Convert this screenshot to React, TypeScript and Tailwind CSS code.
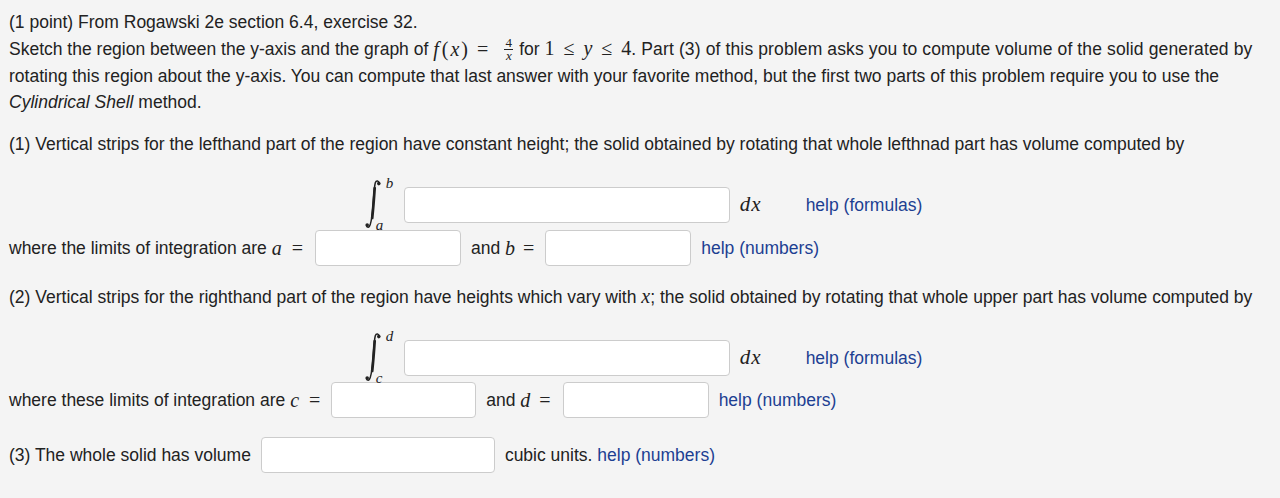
import React from "react";

const V = ({ children, size = "text-[20px]", cls = "" }: { children: React.ReactNode; size?: string; cls?: string }) => (
  <span className={`font-['Liberation_Serif','DejaVu_Serif',serif] italic leading-none ${size} ${cls}`}>{children}</span>
);
const O = ({ children, cls = "" }: { children: React.ReactNode; cls?: string }) => (
  <span className={`font-['Liberation_Serif','DejaVu_Serif',serif] text-[20px] leading-none ${cls}`}>{children}</span>
);

const Link = ({ children, cls = "" }: { children: React.ReactNode; cls?: string }) => (
  <a href="#" className={`text-[#1d3f92] whitespace-nowrap ${cls}`}>{children}</a>
);

const Box = ({ w, cls = "" }: { w: string; cls?: string }) => (
  <input
    type="text"
    className={`h-[36px] ${w} bg-white border border-[#cccccc] rounded-[4px] shrink-0 outline-none ${cls}`}
  />
);

const Integral = ({ upper, lower }: { upper: string; lower: string }) => (
  <div className="relative w-[40px] h-[36px] shrink-0">
    <svg className="absolute left-0 top-[-8px]" width="18" height="50" viewBox="0 0 18 50" fill="none">
      <path
        d="M15.4,4.4 C14.8,1.6 12.2,1.2 11.3,3.8 C10.1,8 9.6,20 8.6,31 C7.9,38.5 7.2,45 5.3,47.5 C4.3,48.8 2.8,48.2 2.6,46.6"
        stroke="#222"
        strokeWidth="1.5"
        strokeLinecap="round"
      />
      <path d="M10.7,9 C10.1,18 9.4,28 8.2,39" stroke="#222" strokeWidth="2.7" strokeLinecap="round" />
      <circle cx="14.8" cy="4.6" r="1.8" fill="#222" />
      <circle cx="3.2" cy="46" r="1.8" fill="#222" />
    </svg>
    <span className="absolute left-[22px] top-[-11px] font-['Liberation_Serif','DejaVu_Serif',serif] italic text-[15px] leading-none">
      {upper}
    </span>
    <span className="absolute left-[12px] top-[31px] font-['Liberation_Serif','DejaVu_Serif',serif] italic text-[15px] leading-none">
      {lower}
    </span>
  </div>
);

const Display = ({ upper, lower, cls }: { upper: string; lower: string; cls: string }) => (
  <div className={`flex items-center justify-center h-[36px] ${cls}`}>
    <div className="flex items-center pl-[6px]">
      <Integral upper={upper} lower={lower} />
      <Box w="w-[326px]" />
      <span className="ml-[10px] w-[24px]">
        <V size="text-[21px]" cls="tracking-[1px]">dx</V>
      </span>
      <Link cls="ml-[42px]">help (formulas)</Link>
    </div>
  </div>
);

export default function App() {
  return (
    <div className="min-h-screen bg-[#f4f4f4] text-[#222] font-['Liberation_Sans',Arial,sans-serif] text-[17.5px] px-[9px] pt-[9px] pb-[20px]">
      <p className="leading-[26.67px] whitespace-nowrap">
        (1 point) From Rogawski 2e section 6.4, exercise 32.
        <br />
        Sketch the region between the y-axis and the graph of{" "}
        <span className="inline-flex items-center align-middle relative top-[-1px]">
          <V cls="mr-[2px]">f</V>
          <O cls="ml-[1px]">(</O>
          <V cls="mx-[2px]">x</V>
          <O>)</O>
          <O cls="ml-[9px] mr-[2px]">=</O>
          <span className="inline-flex flex-col items-center ml-[14px] mr-[1px] font-['Liberation_Serif','DejaVu_Serif',serif] text-[13px] leading-[12px]">
            <span>4</span>
            <span className="block w-[9px] h-[1px] bg-[#222]" />
            <span className="italic">x</span>
          </span>
        </span>{" "}
        for <O>1</O>
        <O cls="mx-[9px]">≤</O>
        <V>y</V>
        <O cls="mx-[9px]">≤</O>
        <O>4</O>
        <span className="tracking-[0.13px]">. Part (3) of this problem asks you to compute volume of the solid generated by</span>
        <br />
        rotating this region about the y-axis. You can compute that last answer with your favorite method, but the first two parts of this problem require you to use the
        <br />
        <em>Cylindrical Shell</em> method.
      </p>

      <p className="mt-[15px] leading-[26.67px] whitespace-nowrap">
        (1) Vertical strips for the lefthand part of the region have constant height; the solid obtained by rotating that whole lefthnad part has volume computed by
      </p>

      <Display upper="b" lower="a" cls="mt-[29.6px]" />

      <div className="mt-[7px] flex items-center h-[36px] whitespace-nowrap">
        <span>where the limits of integration are&nbsp;</span>
        <V>a</V>
        <O cls="ml-[10px]">=</O>
        <Box w="w-[146px]" cls="ml-[12px]" />
        <span className="ml-[10px]">and&nbsp;</span>
        <V>b</V>
        <O cls="ml-[8px]">=</O>
        <Box w="w-[146px]" cls="ml-[11px]" />
        <Link cls="ml-[10px]">help (numbers)</Link>
      </div>

      <p className="mt-[17.7px] leading-[26.67px] whitespace-nowrap">
        (2) Vertical strips for the righthand part of the region have heights which vary with <V>x</V>; the solid obtained by rotating that whole upper part has volume computed by
      </p>

      <Display upper="d" lower="c" cls="mt-[29.6px]" />

      <div className="mt-[6px] flex items-center h-[36px] whitespace-nowrap">
        <span>where these limits of integration are&nbsp;</span>
        <V>c</V>
        <O cls="ml-[10px]">=</O>
        <Box w="w-[145px]" cls="ml-[11px]" />
        <span className="ml-[10px]">and&nbsp;</span>
        <V>d</V>
        <O cls="ml-[9px]">=</O>
        <Box w="w-[146px]" cls="ml-[12px]" />
        <Link cls="ml-[10px]">help (numbers)</Link>
      </div>

      <div className="mt-[19px] flex items-center h-[36px] whitespace-nowrap">
        <span>(3) The whole solid has volume</span>
        <Box w="w-[234px]" cls="ml-[10px]" />
        <span className="ml-[10px]">cubic units.&nbsp;</span>
        <Link>help (numbers)</Link>
      </div>
    </div>
  );
}
